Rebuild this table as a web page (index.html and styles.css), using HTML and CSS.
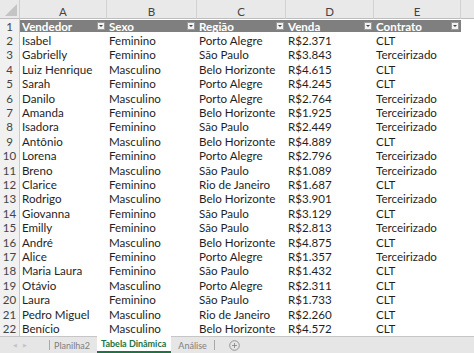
FILE: index.html
```html
<!DOCTYPE html>
<html lang="pt">
<head>
<meta charset="utf-8">
<link rel="stylesheet" href="styles.css">
</head>
<body>
<div class="app">
  <div class="sheet" id="sheet">
    <div class="corner"><span class="tri"></span></div>
    <div class="colhdr">A</div>
    <div class="colhdr">B</div>
    <div class="colhdr">C</div>
    <div class="colhdr">D</div>
    <div class="colhdr">E</div>
    <div class="colhdr last"></div>

    <div class="rowhdr">1</div>
    <div class="th"><span>Vendedor</span><span class="dd"></span></div>
    <div class="th"><span>Sexo</span><span class="dd"></span></div>
    <div class="th"><span>Região</span><span class="dd"></span></div>
    <div class="th"><span>Venda</span><span class="dd"></span></div>
    <div class="th"><span>Contrato</span><span class="dd"></span></div>
    <div class="cell"></div>

    <div class="rowhdr">2</div><div class="cell">Isabel</div><div class="cell">Feminino</div><div class="cell">Porto Alegre</div><div class="cell">R$2.371</div><div class="cell">CLT</div><div class="cell"></div>
    <div class="rowhdr">3</div><div class="cell">Gabrielly</div><div class="cell">Feminino</div><div class="cell">São Paulo</div><div class="cell">R$3.843</div><div class="cell">Terceirizado</div><div class="cell"></div>
    <div class="rowhdr">4</div><div class="cell">Luiz Henrique</div><div class="cell">Masculino</div><div class="cell">Belo Horizonte</div><div class="cell">R$4.615</div><div class="cell">CLT</div><div class="cell"></div>
    <div class="rowhdr">5</div><div class="cell">Sarah</div><div class="cell">Feminino</div><div class="cell">Porto Alegre</div><div class="cell">R$4.245</div><div class="cell">CLT</div><div class="cell"></div>
    <div class="rowhdr">6</div><div class="cell">Danilo</div><div class="cell">Masculino</div><div class="cell">Porto Alegre</div><div class="cell">R$2.764</div><div class="cell">Terceirizado</div><div class="cell"></div>
    <div class="rowhdr">7</div><div class="cell">Amanda</div><div class="cell">Feminino</div><div class="cell">Belo Horizonte</div><div class="cell">R$1.925</div><div class="cell">Terceirizado</div><div class="cell"></div>
    <div class="rowhdr">8</div><div class="cell">Isadora</div><div class="cell">Feminino</div><div class="cell">São Paulo</div><div class="cell">R$2.449</div><div class="cell">Terceirizado</div><div class="cell"></div>
    <div class="rowhdr">9</div><div class="cell">Antônio</div><div class="cell">Masculino</div><div class="cell">Belo Horizonte</div><div class="cell">R$4.889</div><div class="cell">CLT</div><div class="cell"></div>
    <div class="rowhdr">10</div><div class="cell">Lorena</div><div class="cell">Feminino</div><div class="cell">Porto Alegre</div><div class="cell">R$2.796</div><div class="cell">Terceirizado</div><div class="cell"></div>
    <div class="rowhdr">11</div><div class="cell">Breno</div><div class="cell">Masculino</div><div class="cell">São Paulo</div><div class="cell">R$1.089</div><div class="cell">Terceirizado</div><div class="cell"></div>
    <div class="rowhdr">12</div><div class="cell">Clarice</div><div class="cell">Feminino</div><div class="cell">Rio de Janeiro</div><div class="cell">R$1.687</div><div class="cell">CLT</div><div class="cell"></div>
    <div class="rowhdr">13</div><div class="cell">Rodrigo</div><div class="cell">Masculino</div><div class="cell">Belo Horizonte</div><div class="cell">R$3.901</div><div class="cell">Terceirizado</div><div class="cell"></div>
    <div class="rowhdr">14</div><div class="cell">Giovanna</div><div class="cell">Feminino</div><div class="cell">São Paulo</div><div class="cell">R$3.129</div><div class="cell">CLT</div><div class="cell"></div>
    <div class="rowhdr">15</div><div class="cell">Emilly</div><div class="cell">Feminino</div><div class="cell">São Paulo</div><div class="cell">R$2.813</div><div class="cell">Terceirizado</div><div class="cell"></div>
    <div class="rowhdr">16</div><div class="cell">André</div><div class="cell">Masculino</div><div class="cell">Belo Horizonte</div><div class="cell">R$4.875</div><div class="cell">CLT</div><div class="cell"></div>
    <div class="rowhdr">17</div><div class="cell">Alice</div><div class="cell">Feminino</div><div class="cell">Porto Alegre</div><div class="cell">R$1.357</div><div class="cell">Terceirizado</div><div class="cell"></div>
    <div class="rowhdr">18</div><div class="cell">Maria Laura</div><div class="cell">Feminino</div><div class="cell">São Paulo</div><div class="cell">R$1.432</div><div class="cell">CLT</div><div class="cell"></div>
    <div class="rowhdr">19</div><div class="cell">Otávio</div><div class="cell">Masculino</div><div class="cell">Porto Alegre</div><div class="cell">R$2.311</div><div class="cell">CLT</div><div class="cell"></div>
    <div class="rowhdr">20</div><div class="cell">Laura</div><div class="cell">Feminino</div><div class="cell">São Paulo</div><div class="cell">R$1.733</div><div class="cell">CLT</div><div class="cell"></div>
    <div class="rowhdr">21</div><div class="cell">Pedro Miguel</div><div class="cell">Masculino</div><div class="cell">Rio de Janeiro</div><div class="cell">R$2.260</div><div class="cell">CLT</div><div class="cell"></div>
    <div class="rowhdr">22</div><div class="cell">Benício</div><div class="cell">Masculino</div><div class="cell">Belo Horizonte</div><div class="cell">R$4.572</div><div class="cell">CLT</div><div class="cell"></div>
  </div>
  <div class="tabbar">
    <div class="nav"><span class="arr">&#9664;</span><span class="arr">&#9654;</span></div>
    <div class="tab first">Planilha2</div>
    <div class="tab active">Tabela Dinâmica</div>
    <div class="tab third">Análise</div>
    <div class="add">
      <svg width="11" height="11" viewBox="0 0 11 11"><circle cx="5.5" cy="5.5" r="4.8" fill="none" stroke="#8a8a8a" stroke-width="0.9"/><path d="M5.5 3v5M3 5.5h5" stroke="#8a8a8a" stroke-width="0.9"/></svg>
    </div>
    <div class="rest"></div>
  </div>
</div>
</body>
</html>
```
FILE: styles.css
```css
* { box-sizing: border-box; }
html, body { margin: 0; padding: 0; background: #fff; }
body { width: 474px; height: 353px; overflow: hidden; font-family: "Lato", "Liberation Sans", sans-serif; }
.app { display: flex; flex-direction: column; height: 353px; }
.sheet {
  flex: 1;
  overflow: hidden;
  display: grid;
  grid-template-columns: 20px 87px 90px 89px 88px 87px 1fr;
  grid-template-rows: 19px;
  grid-auto-rows: 14.4px;
  font-size: 11.6px;
  color: #1f1f1f;
}
.corner { background: #e9e9e9; border-right: 1px solid #cfcfcf; border-bottom: 1px solid #bdbdbd; position: relative; }
.tri { position: absolute; right: 2px; bottom: 2px; width: 0; height: 0; border-left: 12px solid transparent; border-bottom: 12px solid #c4c4c4; }
.colhdr {
  background: #e9e9e9;
  border-right: 1px solid #d2d2d2;
  border-bottom: 1px solid #bdbdbd;
  color: #444;
  font-size: 11.5px;
  display: flex; align-items: center; justify-content: center;
  padding-top: 4px;
}
.colhdr.last { border-right: none; }
.rowhdr {
  background: #f1f1f1;
  border-right: 1px solid #c8c8c8;
  color: #444;
  font-size: 11.5px;
  display: flex; align-items: center; justify-content: center;
}
.cell { display: flex; align-items: center; padding-left: 2px; white-space: nowrap; overflow: visible; }
.th {
  background: #7f7f7f;
  color: #fff;
  font-weight: bold;
  display: flex; align-items: center; justify-content: space-between;
  padding-left: 2px; padding-right: 2px;
  margin: 1px 0;
}
.dd {
  width: 8px; height: 8px;
  background: #f2f2f2;
  border: 1px solid #9a9a9a;
  position: relative;
}
.dd::after {
  content: ""; position: absolute; left: 1px; top: 2px;
  border-left: 2px solid transparent; border-right: 2px solid transparent; border-top: 2px solid #444;
}
.tabbar {
  height: 17px;
  flex: none;
  background: #e6e6e6;
  border-top: 1px solid #c6c6c6;
  display: flex; align-items: stretch;
  font-size: 9px;
  color: #808080;
}
.nav { width: 50px; display: flex; align-items: center; gap: 6px; padding-left: 13px; color: #c4c4c4; font-size: 5px; border-right: 1px solid #a8a8a8; margin: 3px 0; }
.tab { display: flex; align-items: center; }
.tab.first { padding: 0 7px 0 4px; }
.tab.active { background: #fff; color: #217346; font-weight: bold; border-bottom: 2px solid #217346; margin-top: -1px; padding: 0 5px 0 4px; }
.tab.third { border-right: 1px solid #a8a8a8; margin: 3px 0; padding: 0 7px; }
.add { display: flex; align-items: center; padding-left: 14px; }
.rest { flex: 1; }
```
